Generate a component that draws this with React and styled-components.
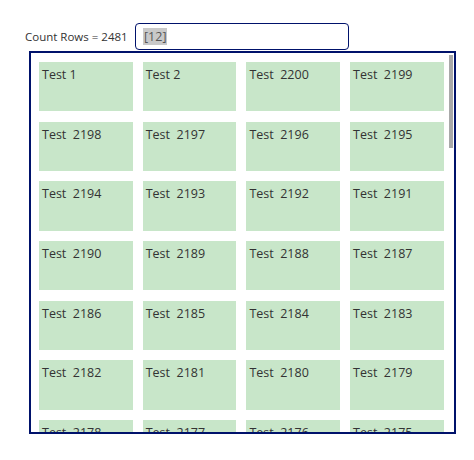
import React from "react";
import styled, { createGlobalStyle } from "styled-components";

const Global = createGlobalStyle`
  html, body { margin: 0; padding: 0; background: #ffffff; }
  body { font-family: "Open Sans", "Noto Sans", sans-serif; }
`;

const Page = styled.div`
  width: 474px;
  height: 460px;
  box-sizing: border-box;
  padding: 23px 0 0 25px;
`;

const Header = styled.div`
  display: flex;
  align-items: center;
  height: 27px;
`;

const Label = styled.div`
  width: 110px;
  font-size: 11.5px;
  color: #333333;
  white-space: nowrap;
`;

const SearchBox = styled.div`
  box-sizing: border-box;
  width: 214px;
  height: 27px;
  border: 1.5px solid #00126b;
  border-radius: 4px;
  display: flex;
  align-items: center;
  padding-left: 7px;
  font-size: 12.5px;
  color: #555555;
`;

const Selected = styled.span`
  background: #c9c9c9;
  line-height: 17px;
  padding: 0 1px;
`;

const Gallery = styled.div`
  position: relative;
  box-sizing: border-box;
  width: 427px;
  height: 383px;
  margin: 1px 0 0 4px;
  border: 2px solid #00126b;
  overflow: hidden;
`;

const Grid = styled.div`
  display: grid;
  grid-template-columns: repeat(4, 93.5px);
  grid-auto-rows: 49.4px;
  column-gap: 10.2px;
  row-gap: 10.3px;
  padding: 9px 0 0 8px;
`;

const Tile = styled.div`
  background: #c8e6c9;
  padding: 4px 0 0 3px;
  font-size: 12.5px;
  color: #333333;
  white-space: pre;
`;

const Scrollbar = styled.div`
  position: absolute;
  top: 2px;
  right: 1px;
  width: 4px;
  height: 93px;
  background: #a9a9a9;
`;

const labels = ["Test 1", "Test 2"];
for (let n = 2200; n >= 2175; n--) labels.push(`Test  ${n}`);

export default function App() {
  return (
    <>
      <Global />
      <Page>
        <Header>
          <Label>Count Rows = 2481</Label>
          <SearchBox>
            <Selected>[12]</Selected>
          </SearchBox>
        </Header>
        <Gallery>
          <Grid>
            {labels.map((t) => (
              <Tile key={t}>{t}</Tile>
            ))}
          </Grid>
          <Scrollbar />
        </Gallery>
      </Page>
    </>
  );
}
